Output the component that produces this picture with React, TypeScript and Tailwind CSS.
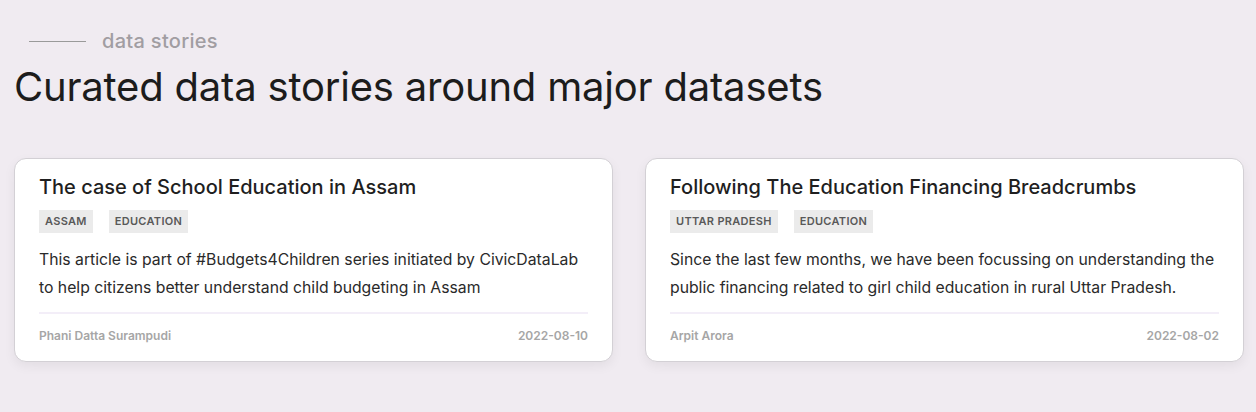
import React from "react";

const stories = [
  {
    title: "The case of School Education in Assam",
    tags: ["ASSAM", "EDUCATION"],
    desc: "This article is part of #Budgets4Children series initiated by CivicDataLab to help citizens better understand child budgeting in Assam",
    author: "Phani Datta Surampudi",
    date: "2022-08-10",
  },
  {
    title: "Following The Education Financing Breadcrumbs",
    tags: ["UTTAR PRADESH", "EDUCATION"],
    desc: "Since the last few months, we have been focussing on understanding the public financing related to girl child education in rural Uttar Pradesh.",
    author: "Arpit Arora",
    date: "2022-08-02",
  },
];

export default function App() {
  return (
    <div
      className="w-[1256px] h-[412px] bg-[#f0ebf1] overflow-hidden"
      style={{ fontFamily: "Inter, 'Noto Sans', sans-serif" }}
    >
      <div className="pl-[14px] pt-[28px]">
        <div className="flex items-center pl-[15px] h-[26px]">
          <div className="w-[57px] h-px bg-[#9a9a9a]" />
          <span className="ml-[16px] text-[20px] font-medium text-[#a19da2] tracking-[0.3px]">data stories</span>
        </div>
        <h1 className="mt-[9px] text-[40px] leading-[48px] font-normal text-[#1c1c1c] tracking-[-0.2px]">
          Curated data stories around major datasets
        </h1>
        <div className="mt-[47px] grid grid-cols-[599px_599px] gap-[32px]">
          {stories.map((s) => (
            <div
              key={s.title}
              className="bg-white border border-[#d3d0d5] rounded-[12px] shadow-[0_4px_12px_rgba(0,0,0,0.06)] px-[24px] pt-[14px] h-[204px] flex flex-col"
            >
              <h2 className="text-[20px] leading-[28px] font-medium text-[#1f1f1f] tracking-[0px]">{s.title}</h2>
              <div className="mt-[9px] flex gap-[16px]">
                {s.tags.map((t) => (
                  <span
                    key={t}
                    className="bg-[#ebebeb] px-[6px] h-[23px] flex items-center text-[11px] font-semibold text-[#595959] tracking-[0.3px]"
                  >
                    {t}
                  </span>
                ))}
              </div>
              <p className="mt-[13px] -mr-[6px] text-[15.75px] leading-[28px] text-[#2a2a2a]">{s.desc}</p>
              <div className="mt-[10px] h-[2px] bg-[#f3eef8]" />
              <div className="mt-[13px] flex justify-between text-[12px] font-semibold text-[#a6a6a6]">
                <span>{s.author}</span>
                <span>{s.date}</span>
              </div>
            </div>
          ))}
        </div>
      </div>
    </div>
  );
}
